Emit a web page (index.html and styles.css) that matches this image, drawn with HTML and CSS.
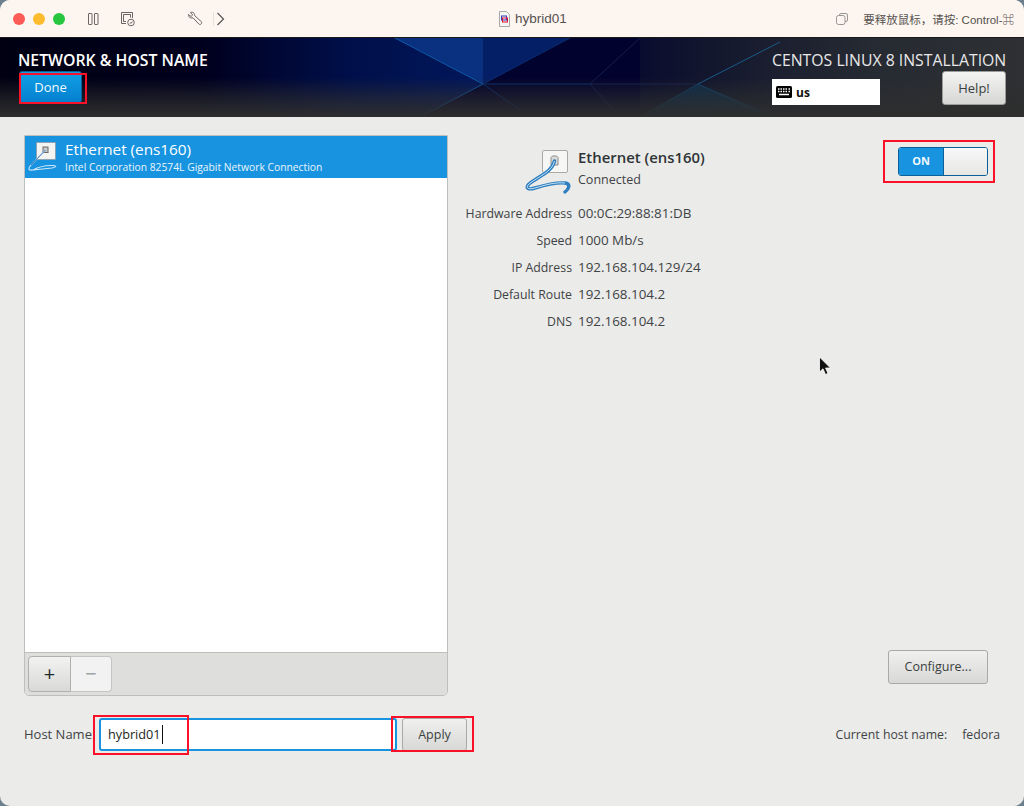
FILE: index.html
```html
<!DOCTYPE html>
<html lang="en">
<head>
<meta charset="utf-8">
<title>hybrid01</title>
<link rel="stylesheet" href="styles.css">
</head>
<body>
<div class="window">
  <div class="titlebar">
    <div class="lights"><i class="light red"></i><i class="light yellow"></i><i class="light green"></i></div>
    <svg class="tb-icon pause" width="12" height="14" viewBox="0 0 12 14"><rect x="1.500" y="1.500" width="3.500" height="11" rx=".5"/><rect x="7.500" y="1.500" width="3.500" height="11" rx=".5"/></svg>
    <svg class="tb-icon snap" width="16" height="16" viewBox="0 0 16 16"><path d="M6 12.500H1.500V1.500h11V7"/><path d="M3.500 3.500h7v3M3.500 3.500v7H6"/><circle cx="11" cy="11.500" r="3.300"/><path d="M9.800 12h1.700l.8-1.500"/></svg>
    <svg class="tb-icon wrench" width="16" height="16" viewBox="0 0 16 16"><path d="M1.500 3.500L4 5.500 5.700 4 3.500 1.500C5.500.5 8 2 7.700 4.700L14.300 10.600C15.600 12 13.500 14.600 11.800 13L6 6.800C3.500 7.500 1 6 1.500 3.500z"/></svg>
    <i class="tb-sep"></i>
    <svg class="tb-icon chevron" width="9" height="14" viewBox="0 0 9 14"><path d="M1.500 1L7.500 7 1.500 13"/></svg>
    <div class="tb-title">
      <svg width="11" height="16" viewBox="0 0 11 16"><path d="M.5.5h7l3 3v12H.5z" fill="#f4f4f4" stroke="#a8a8a8"/><rect x="2.500" y="5" width="5" height="4" fill="none" stroke="#2a3ec0"/><rect x="3.500" y="7" width="5" height="4" fill="none" stroke="#e01030"/></svg>
      <span>hybrid01</span>
    </div>
    <div class="tb-right">
      <svg class="tb-icon copy" width="12" height="12" viewBox="0 0 12 12"><rect x=".5" y="2.500" width="8.500" height="9" rx="2"/><path d="M3.500 2.500V2A1.500 1.500 0 0 1 5 .5h5A1.500 1.500 0 0 1 11.500 2v5A1.500 1.500 0 0 1 10 8.500H9"/></svg>
      <span class="tb-hint">要释放鼠标，请按: Control-⌘</span>
    </div>
  </div>

  <header class="banner">
    <svg class="banner-art" width="1024" height="79" viewBox="0 0 1024 79">
      <defs>
        <linearGradient id="fade" x1="0" y1="0" x2="0" y2="1">
          <stop offset=".5" stop-color="#2e2e2e" stop-opacity="0"/>
          <stop offset=".75" stop-color="#2e2e2e" stop-opacity=".55"/>
          <stop offset="1" stop-color="#2e2e2e" stop-opacity="1"/>
        </linearGradient>
      </defs>
      <polygon points="483,46 570,0 640,0 640,79 420,79" fill="#02022e"/>
      <polygon points="395,0 483,0 483,46" fill="#0a3080"/>
      <polygon points="483,0 570,0 483,46" fill="#051f66"/>
      <polygon points="698,46 780,79 640,79" fill="#0b3a5c" opacity=".65"/>
      <path d="M395 0L483 46M483 46L420 79" stroke="#0d5aa8" fill="none"/>
      <path d="M483 46L570 0M483 46L590 46M483 46L530 79" stroke="#0a2d70" fill="none"/>
      <path d="M590 46L640 0M590 46H698M590 46L620 79" stroke="#1c2f5c" fill="none" opacity=".7"/>
      <path d="M698 46L780 4" stroke="#1a6ba0" fill="none" opacity=".8"/>
      <path d="M698 46L640 79M698 46L770 79" stroke="#14527c" fill="none" opacity=".7"/>
      <rect width="1024" height="79" fill="url(#fade)"/>
    </svg>
    <div class="banner-left">
      <h1>NETWORK &amp; HOST NAME</h1>
      <button class="done">Done</button>
    </div>
    <div class="banner-right">
      <div class="product">CENTOS LINUX 8 INSTALLATION</div>
      <div class="banner-controls">
        <div class="kbd">
          <svg width="16" height="12" viewBox="0 0 16 12"><rect width="16" height="12" rx="1.500" fill="#000"/><path d="M2 3h1.500M4.500 3H6M7 3h1.500M9.500 3H11M12.500 3H14M2 5.500h1.500M4.500 5.500H6M7 5.500h1.500M9.500 5.500H11M12.500 5.500H14M3 8.500h10" stroke="#fff" stroke-width="1.300"/></svg>
          <b>us</b>
        </div>
        <button class="help">Help!</button>
      </div>
    </div>
  </header>

  <main class="content">
    <div class="panes">
      <section class="list-pane">
        <div class="list">
          <div class="device selected">
            <svg class="dev-icon" width="32" height="34" viewBox="0 0 32 34">
              <rect x="10.500" y="2.500" width="19" height="17" fill="#f4f4f2" stroke="#8b97a0" stroke-width=".7"/>
              <rect x="17" y="7" width="5" height="5.500" fill="#c9c9c7" stroke="#6a6a68"/>
              <path d="M19.500 10L5 25Q0 31 7 30L26 28Q33 26.500 27 25.500Q16 25 7 30" fill="none" stroke="#cfe8f8" stroke-width="1.100"/>
              <path d="M19.500 10L5 25" fill="none" stroke="#3a78b8" stroke-width="1"/>
            </svg>
            <div class="dev-text">
              <div class="dev-name">Ethernet (ens160)</div>
              <div class="dev-desc">Intel Corporation 82574L Gigabit Network Connection</div>
            </div>
          </div>
        </div>
        <div class="list-toolbar">
          <div class="add-remove">
            <button class="tool add">+</button>
            <button class="tool remove">−</button>
          </div>
        </div>
      </section>

      <section class="detail">
        <div class="detail-top">
          <div class="detail-head">
            <svg class="cable" width="48" height="46" viewBox="0 0 48 46">
              <rect x="17.500" y="2.500" width="25" height="22" rx="1.500" fill="#f6f6f5" stroke="#a9a9a6"/>
              <path d="M26 9.500l1.500-1.500h4l1.500 1.500V17h-7z" fill="#dcdcda" stroke="#8a8a88"/>
              <path d="M29.500 13C27 24 14 28 4 36C0 40 3 42 10 40C20 37 30 34 40 35C46 36 44 41 40 44" fill="none" stroke="#2f7fc0" stroke-width="3.400" stroke-linecap="round"/>
              <path d="M29.500 13C27 24 14 28 4 36C0 40 3 42 10 40C20 37 30 34 40 35" fill="none" stroke="#c4e3f6" stroke-width="1"/>
            </svg>
            <div class="head-text">
              <div class="head-name">Ethernet (ens160)</div>
              <div class="head-status">Connected</div>
            </div>
          </div>
          <div class="switch"><span class="on">ON</span><span class="knob"></span></div>
        </div>
        <dl class="props">
          <dt>Hardware Address</dt><dd>00:0C:29:88:81:DB</dd>
          <dt>Speed</dt><dd>1000 Mb/s</dd>
          <dt>IP Address</dt><dd>192.168.104.129/24</dd>
          <dt>Default Route</dt><dd>192.168.104.2</dd>
          <dt>DNS</dt><dd>192.168.104.2</dd>
        </dl>
        <div class="detail-actions"><button class="btn configure">Configure...</button></div>
      </section>
    </div>

    <div class="hostname-row">
      <label class="host-label">Host Name:</label>
      <div class="host-input"><span>hybrid01</span><i class="caret"></i></div>
      <button class="btn apply">Apply</button>
      <div class="current"><span>Current host name:</span><span>fedora</span></div>
    </div>
  </main>

  <i class="mark mark-done"></i>
  <i class="mark mark-switch"></i>
  <i class="mark mark-input"></i>
  <i class="mark mark-apply"></i>
  <svg class="pointer" width="14" height="20" viewBox="0 0 14 20"><path d="M1.500 1V16L5 12.800 7.500 18.500 10 17.400 7.600 12H12.500z" fill="#111" stroke="#fff" stroke-width=".8"/></svg>
</div>
</body>
</html>
```

FILE: styles.css
```css
* { box-sizing: border-box; }
html, body { margin: 0; padding: 0; background: #6d7f8c; }
body { width: 1024px; height: 806px; overflow: hidden; font-family: "Open Sans", "Noto Sans", "Noto Sans CJK SC", sans-serif; font-size: 12px; color: #2e3436; }
button { font-family: inherit; padding: 0; margin: 0; }

.window { position: relative; width: 1024px; height: 806px; display: flex; flex-direction: column; background: #ebebe9; border-radius: 10px; overflow: hidden; }

.titlebar { flex: 0 0 38px; height: 38px; display: flex; align-items: center; background: #fdf5f0; border-bottom: 1px solid #1a1a1a; position: relative; }
.lights { display: flex; gap: 8px; margin-left: 13px; }
.light { width: 12px; height: 12px; border-radius: 50%; display: block; }
.red { background: #fc5b57; }
.yellow { background: #fdbb2e; }
.green { background: #27c63f; }
.tb-icon { fill: none; stroke: #6a6662; stroke-width: 1; display: block; flex: none; }
.pause { margin-left: 22px; }
.snap { margin-left: 21px; }
.wrench { margin-left: 51px; }
.tb-sep { width: 1px; height: 14px; background: #e8e0da; margin-left: 10px; flex: none; }
.chevron { margin-left: 2px; stroke: #555; stroke-width: 1.200; }
.tb-title { display: flex; align-items: center; gap: 5px; margin-left: 274px; font-size: 13.500px; color: #55524f; font-family: "Liberation Sans", sans-serif; }
.tb-right { display: flex; align-items: center; margin-left: auto; margin-right: 10px; }
.copy { stroke: #9a9692; margin-right: 15px; }
.tb-hint { font-size: 11.500px; color: #55524f; font-family: "Liberation Sans", "Noto Sans CJK SC", sans-serif; white-space: nowrap; }

.banner { position: relative; flex: 0 0 79px; height: 79px; display: flex; justify-content: space-between; background: linear-gradient(90deg, #000012 0%, #00001e 20%, #000f4a 34%, #02185c 48%, #02022e 50%, #03052e 58%, #14182e 70%, #262a32 85%, #2e3033 100%); color: #fff; }
.banner-art { position: absolute; left: 0; top: 0; }
.banner-left, .banner-right { position: relative; }
.banner-left { padding: 12px 0 0 18px; }
h1 { margin: 0; font-size: 15.800px; font-weight: 600; line-height: 20px; color: #fff; white-space: nowrap; }
.done { display: block; margin-top: 1px; margin-left: 1px; width: 63px; height: 32px; font-size: 13px; color: #f2f9fd; background: linear-gradient(180deg, #12a0e4, #0480d0); border: 1px solid #0a5f98; border-radius: 3px; }
.banner-right { width: 252px; padding: 12px 18px 0 0; }
.product { font-size: 15.800px; line-height: 20px; color: #e8e8e8; white-space: nowrap; text-align: right; }
.banner-controls { display: flex; align-items: flex-start; justify-content: space-between; margin-top: 9px; }
.kbd { width: 108px; height: 26px; background: #fff; display: flex; align-items: center; gap: 4px; padding-left: 4px; color: #111; font-size: 12px; }
.help { width: 64px; height: 34px; margin-top: -8px; font-size: 13px; color: #3a3f40; background: linear-gradient(180deg, #f4f4f3, #d6d6d4); border: 1px solid #9c9c9a; border-radius: 3px; }

.content { flex: 1; display: flex; flex-direction: column; padding: 18px 24px 0; min-height: 0; }
.panes { display: flex; height: 561px; }
.list-pane { width: 424px; height: 561px; flex: none; display: flex; flex-direction: column; border: 1px solid #bebebc; border-radius: 0 0 5px 5px; background: #fff; overflow: hidden; }
.list { flex: 1; background: #fff; }
.device { height: 42px; display: flex; align-items: center; background: #1793e0; color: #fff; }
.dev-icon { margin-left: 1px; flex: none; }
.dev-text { margin-left: 7px; align-self: flex-start; padding-top: 4px; }
.dev-name { font-size: 15.300px; line-height: 18px; white-space: nowrap; }
.dev-desc { font-size: 10.300px; line-height: 14px; margin-top: 2px; white-space: nowrap; color: #eaf5fc; }
.list-toolbar { height: 43px; flex: none; background: #dededc; border-top: 1px solid #bebebc; padding: 3px 0 0 3px; }
.add-remove { display: flex; height: 36px; }
.tool { height: 36px; font-size: 20px; line-height: 30px; border: 1px solid #c4c4c2; }
.add { width: 43px; background: linear-gradient(180deg, #f2f2f1, #d9d9d7); color: #23282a; border-radius: 4px 0 0 4px; border-color: #b0b0ae; }
.remove { width: 41px; background: #f2f2f2; color: #a0a2a3; border-left: none; border-radius: 0 4px 4px 0; }

.detail { flex: 1; display: flex; flex-direction: column; min-width: 0; }
.detail-top { display: flex; justify-content: space-between; height: 60px; padding: 12px 12px 0 77px; }
.detail-head { display: flex; }
.cable { flex: none; margin-top: 1px; }
.head-text { margin-left: 5px; }
.head-name { font-size: 14.900px; font-weight: 600; line-height: 20px; color: #2e3436; white-space: nowrap; }
.head-status { font-size: 12.500px; line-height: 18px; margin-top: 4px; color: #3e4345; }
.switch { width: 90px; height: 29px; display: flex; border: 1px solid #0a5f98; border-radius: 3px; overflow: hidden; flex: none; }
.on { width: 44px; padding-bottom: 3px; background: #1793e0; color: #f0f8fd; font-size: 11px; font-weight: 700; display: flex; align-items: center; justify-content: center; }
.knob { flex: 1; background: linear-gradient(180deg, #f8f8f8, #e6e6e5); border-left: 1px solid #0a5f98; }
.props { margin: 9px 0 0; display: grid; grid-template-columns: 124px auto; column-gap: 6px; grid-auto-rows: 27px; align-items: baseline; justify-content: start; font-size: 12.300px; }
.props dt { text-align: right; color: #3e4345; white-space: nowrap; }
.props dd { margin: 0; color: #3e4345; white-space: nowrap; font-size: 13.400px; }
.detail-actions { margin-top: auto; display: flex; justify-content: flex-end; padding: 0 12px 12px 0; }
.btn { background: linear-gradient(180deg, #f0f0ef, #d8d8d6); border: 1px solid #a9a9a7; border-radius: 3px; color: #3a3f40; font-size: 12.500px; }
.configure { width: 100px; height: 34px; padding-bottom: 2px; }

.hostname-row { display: flex; align-items: center; height: 33px; margin-top: 22px; font-size: 13px; }
.host-label { width: 75px; flex: none; color: #3e4345; white-space: nowrap; padding-bottom: 1px; }
.host-input { width: 298px; height: 33px; flex: none; display: flex; align-items: center; padding: 0 0 1px 7px; background: #fff; border: 2px solid #1793e0; border-radius: 3px; color: #1c1f20; font-size: 12.700px; }
.caret { width: 1px; height: 19px; background: #111; margin-left: 1px; display: block; }
.apply { width: 65px; height: 33px; margin-left: 5px; flex: none; }
.current { margin-left: auto; display: flex; gap: 15px; color: #3e4345; font-size: 12.300px; }

.mark { position: absolute; border: 2px solid #f9112a; display: block; pointer-events: none; }
.mark-done { left: 19px; top: 73px; width: 68px; height: 31px; }
.mark-switch { left: 883px; top: 140px; width: 112px; height: 43px; }
.mark-input { left: 93px; top: 715px; width: 96px; height: 40px; }
.mark-apply { left: 391px; top: 716px; width: 83px; height: 36px; }
.pointer { position: absolute; left: 818px; top: 356px; }
```
